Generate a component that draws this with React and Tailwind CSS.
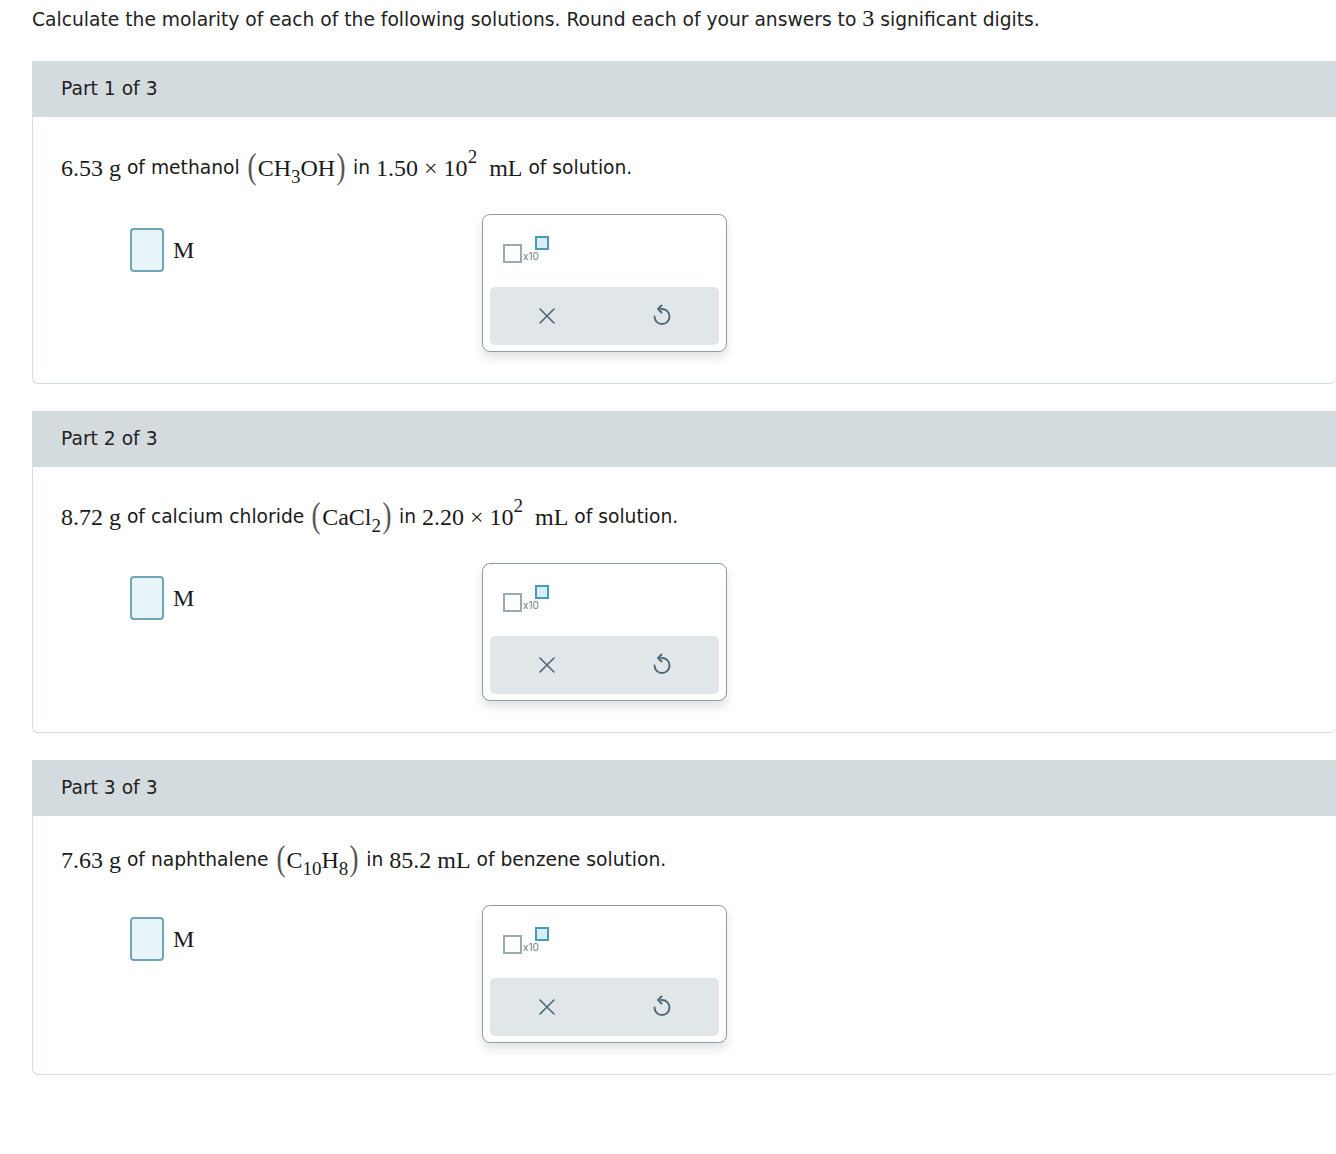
import React from "react";

const sans = { fontFamily: "'DejaVu Sans', Verdana, sans-serif" };

function M({ children, className = "" }) {
  return (
    <span className={`font-['Liberation_Serif',serif] text-[24px] leading-none text-[#1a1a1a] ${className}`}>
      {children}
    </span>
  );
}

function Paren({ children }) {
  return (
    <span className="inline-block font-['Liberation_Serif',serif] text-[36px] leading-none text-[#555] scale-x-[0.75] -translate-y-[2px]">
      {children}
    </span>
  );
}

function Sub({ children }) {
  return <span className="relative top-[7px] text-[19px]">{children}</span>;
}

function Sup({ children }) {
  return <span className="relative -top-[13px] text-[19px]">{children}</span>;
}

function XTen() {
  return (
    <div className="relative h-[30px] w-[60px]">
      <div className="absolute left-0 top-[9px] h-[19px] w-[19px] border-2 border-[#9aaab1]" />
      <span className="absolute left-[20px] top-[16px] font-['Inter',sans-serif] text-[10px] leading-none text-[#6b7f88]">
        x10
      </span>
      <div className="absolute left-[32px] top-[1px] h-[14px] w-[14px] border-2 border-[#4a9bb8] bg-[#d7eef6]" />
    </div>
  );
}

function ToolPanel() {
  return (
    <div className="flex h-[138px] w-[245px] flex-col rounded-[8px] border border-[#8c9fa6] bg-white px-[7px] pb-[6px] shadow-[0_6px_10px_rgba(40,60,70,0.14)]">
      <div className="flex-1 pl-[13px] pt-[20px]">
        <XTen />
      </div>
      <div className="flex h-[58px] items-center rounded-[5px] bg-[#e1e6e9]">
        <div className="flex flex-1 items-center justify-center">
          <svg width="18" height="18" viewBox="0 0 18 18" fill="none" stroke="#4b6875" strokeWidth="1.6" strokeLinecap="round">
            <path d="M2 2 L16 16 M16 2 L2 16" />
          </svg>
        </div>
        <div className="flex flex-1 items-center justify-center pl-[2px]">
          <svg width="22" height="24" viewBox="0 0 22 24" fill="none" stroke="#4b6875" strokeWidth="1.9" strokeLinecap="round" strokeLinejoin="round">
            <path d="M10 5 H11 A7.5 7.5 0 1 1 3.5 12.5" />
            <path d="M10.5 1.5 L7 5 L10.5 8.5" />
          </svg>
        </div>
      </div>
    </div>
  );
}

function Part({ n, line, pt, mt, inputMt }) {
  return (
    <div className="ml-[32px] mb-[27px] rounded-b-[6px] border-b border-l border-[#d5dce0]">
      <div className="flex h-[56px] items-center bg-[#d4dbde] pl-[28px] text-[18.7px] text-[#222]" style={sans}>
        Part {n} of 3
      </div>
      <div className={`px-[28px] pb-[31px] ${pt}`}>
        <div className="flex h-[40px] items-center whitespace-pre text-[18.7px] text-[#1a1a1a]" style={sans}>
          {line}
        </div>
        <div className={`flex items-start ${mt}`}>
          <div className="flex w-[421px] items-center gap-[9px] pl-[69px]">
            <div className={`h-[44px] w-[34px] rounded-[4px] border-2 border-[#6fa5b7] bg-[#e7f4f8] ${inputMt}`} />
            <M className={`${inputMt}`}>M</M>
          </div>
          <ToolPanel />
        </div>
      </div>
    </div>
  );
}

export default function App() {
  const line1 = (
    <>
      <M>6.53 g</M> of methanol <Paren>(</Paren>
      <M>
        CH<Sub>3</Sub>OH
      </M>
      <Paren>)</Paren> in <M>1.50 × 10<Sup>2</Sup>  mL</M> of solution.
    </>
  );
  const line2 = (
    <>
      <M>8.72 g</M> of calcium chloride <Paren>(</Paren>
      <M>
        CaCl<Sub>2</Sub>
      </M>
      <Paren>)</Paren> in <M>2.20 × 10<Sup>2</Sup>  mL</M> of solution.
    </>
  );
  const line3 = (
    <>
      <M>7.63 g</M> of naphthalene <Paren>(</Paren>
      <M>
        C<Sub>10</Sub>H<Sub>8</Sub>
      </M>
      <Paren>)</Paren> in <M>85.2 mL</M> of benzene solution.
    </>
  );

  return (
    <div className="min-h-[1154px] w-[1336px] overflow-hidden bg-white">
      <p className="px-[32px] pb-[28px] pt-[6px] text-[18.7px] leading-[26px] text-[#222]" style={sans}>
        Calculate the molarity of each of the following solutions. Round each of your answers to{" "}
        <M>3</M> significant digits.
      </p>
      <Part n={1} line={line1} pt="pt-[31px]" mt="mt-[26px]" inputMt="mt-[14px]" />
      <Part n={2} line={line2} pt="pt-[30px]" mt="mt-[26px]" inputMt="mt-[13px]" />
      <Part n={3} line={line3} pt="pt-[24px]" mt="mt-[25px]" inputMt="mt-[12px]" />
    </div>
  );
}
